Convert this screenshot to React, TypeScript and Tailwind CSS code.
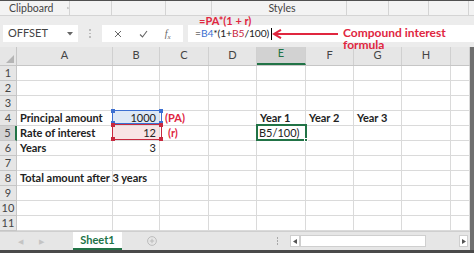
import React from "react";

const cols = ["A", "B", "C", "D", "E", "F", "G", "H", ""];
const widths = ["w-[96px]", "w-[47px]", "w-[49px]", "w-[48px]", "w-[49px]", "w-[48px]", "w-[48px]", "w-[49px]", "flex-1"];

type Cell = { text?: string; cls?: string };

const data: Record<number, Record<number, Cell>> = {
  4: {
    0: { text: "Principal amount", cls: "font-bold pl-[3px]" },
    1: { text: "1000", cls: "justify-end pr-[3px] bg-[#dde8f6]" },
    2: { text: "(PA)", cls: "font-bold text-[#e0263f] pl-[5px]" },
    4: { text: "Year 1", cls: "font-bold pl-[3px]" },
    5: { text: "Year 2", cls: "font-bold pl-[3px]" },
    6: { text: "Year 3", cls: "font-bold pl-[3px]" },
  },
  5: {
    0: { text: "Rate of interest", cls: "font-bold pl-[3px]" },
    1: { text: "12", cls: "justify-end pr-[3px] bg-[#f8e4e5]" },
    2: { text: "(r)", cls: "font-bold text-[#e0263f] pl-[8px]" },
    4: { text: "B5/100)", cls: "pl-[2px]" },
  },
  6: {
    0: { text: "Years", cls: "font-bold pl-[3px]" },
    1: { text: "3", cls: "justify-end pr-[3px]" },
  },
  8: {
    0: { text: "Total amount after 3 years", cls: "font-bold pl-[3px] whitespace-nowrap overflow-visible" },
  },
};

function Handles({ color }: { color: string }) {
  const c = `absolute w-[4px] h-[4px] ${color}`;
  return (
    <>
      <span className={`${c} -left-[2px] -top-[2px]`} />
      <span className={`${c} -right-[2px] -top-[2px]`} />
      <span className={`${c} -left-[2px] -bottom-[2px]`} />
      <span className={`${c} -right-[2px] -bottom-[2px]`} />
    </>
  );
}

export default function App() {
  return (
    <div className="relative w-[474px] h-[253px] overflow-hidden bg-white font-['Lato',sans-serif] text-[#222]">
      {/* ribbon group labels */}
      <div className="h-px bg-[#505050]" />
      <div className="flex h-[15px] bg-[#f3f3f3] border-b border-[#d4d4d4] text-[10.5px] text-[#444] leading-[15px]">
        <div className="w-[70px] flex items-center pl-[9px] gap-[14px] border-r border-[#d4d4d4]">
          <span>Clipboard</span>
          <svg width="6" height="6" viewBox="0 0 6 6" className="text-[#777]">
            <path d="M0.5 0.5H5.5V5.5H0.5Z" fill="none" stroke="currentColor" strokeWidth="0.8" />
            <path d="M1.5 1.5L4.5 4.5M4.5 2.5V4.5H2.5" fill="none" stroke="currentColor" strokeWidth="0.8" />
          </svg>
        </div>
        <div className="w-[42px] border-r border-[#d4d4d4]" />
        <div className="w-[54px] border-r border-[#d4d4d4]" />
        <div className="w-[46px] border-r border-[#d4d4d4]" />
        <div className="w-[135px] border-r border-[#d4d4d4] flex justify-center pl-[6px]">Styles</div>
        <div className="w-[42px] border-r border-[#d4d4d4]" />
        <div className="w-[40px] border-r border-[#d4d4d4]" />
        <div className="w-[40px] border-r border-[#d4d4d4]" />
        <div className="flex-1" />
      </div>

      {/* formula bar */}
      <div className="flex items-start h-[31px] bg-[#ececec] pt-[9px] text-[11px]">
        <div className="ml-[3px] w-[75px] h-[17px] bg-white flex items-center justify-between px-[5px] text-[#444]">
          <span>OFFSET</span>
          <svg width="6" height="4" viewBox="0 0 6 4"><path d="M0 0H6L3 3.5Z" fill="#666" /></svg>
        </div>
        <div className="w-[24px] h-[17px] flex flex-col items-center justify-center gap-[2px]">
          <span className="w-[1.5px] h-[1.5px] bg-[#bbb]" />
          <span className="w-[1.5px] h-[1.5px] bg-[#bbb]" />
          <span className="w-[1.5px] h-[1.5px] bg-[#bbb]" />
        </div>
        <div className="w-[81px] h-[17px] bg-white flex items-center justify-around px-[4px] text-[#555]">
          <svg width="8" height="8" viewBox="0 0 8 8"><path d="M1 1L7 7M7 1L1 7" stroke="#666" strokeWidth="1" /></svg>
          <svg width="9" height="8" viewBox="0 0 9 8"><path d="M1 4.5L3.5 7L8 1" fill="none" stroke="#666" strokeWidth="1.1" /></svg>
          <span className="italic font-['Liberation_Serif',serif] text-[10px] text-[#666]">f<sub className="text-[7px]">x</sub></span>
        </div>
        <div className="ml-[5px] flex-1 h-[17px] bg-white flex items-center pl-[7px] text-[10.3px] tracking-[-0.1px]">
          <span>=</span>
          <span className="text-[#3c6fd1]">B4</span>
          <span>*(1+</span>
          <span className="text-[#c8283e]">B5</span>
          <span>/100)</span>
          <span className="ml-[2px] w-px h-[12px] bg-black" />
        </div>
      </div>

      {/* grid + vertical edge */}
      <div className="flex">
        <div className="flex-1 text-[11px]">
          {/* column headers */}
          <div className="flex h-[19px] bg-[#e6e6e6] border-b border-[#c6c6c6] text-[#444]">
            <div className="w-[17px] border-r border-[#c6c6c6] flex items-end justify-end pr-[2px] pb-[2px]">
              <svg width="8" height="8" viewBox="0 0 8 8"><path d="M8 0V8H0Z" fill="#b5b5b5" /></svg>
            </div>
            {cols.map((c, i) => (
              <div
                key={i}
                className={`${widths[i]} flex items-end pb-[2px] justify-center border-r border-[#d0d0d0] ${
                  i === 4 ? "bg-[#d2d2d2] border-b-2 border-b-[#217346] text-[#217346] pb-0" : ""
                }`}
              >
                {c}
              </div>
            ))}
          </div>
          {/* rows */}
          {Array.from({ length: 11 }, (_, r) => r + 1).map((r) => (
            <div key={r} className="flex h-[15px]">
              <div
                className={`w-[17px] flex items-center justify-center text-[#444] border-b border-r ${
                  r === 5 ? "bg-[#d2d2d2] border-r-2 border-r-[#217346] border-b-[#c6c6c6]" : "bg-[#e6e6e6] border-[#c6c6c6]"
                }`}
              >
                {r}
              </div>
              {cols.map((_, i) => {
                const cell = data[r]?.[i];
                return (
                  <div
                    key={i}
                    className={`${widths[i]} relative flex items-center border-r border-b border-[#dadada] ${
                      i === 0 ? "overflow-visible z-10" : "overflow-hidden"
                    } ${cell?.cls ?? ""}`}
                  >
                    {cell?.text}
                  </div>
                );
              })}
            </div>
          ))}
          {/* sheet tabs / scrollbar */}
          <div className="flex items-stretch h-[19px] bg-[#e6e6e6] border-t border-[#cfcfcf]">
            <div className="w-[73px] flex items-center pl-[18px] gap-[16px] text-[#c4c4c4] text-[7px]">
              <span>◀</span>
              <span>▶</span>
            </div>
            <div className="w-[49px] bg-white border-b-2 border-[#217346] flex items-center justify-center font-bold text-[#217346] text-[11px]">
              Sheet1
            </div>
            <div className="w-[60px] flex items-center justify-center">
              <svg width="10" height="10" viewBox="0 0 10 10">
                <circle cx="5" cy="5" r="4.4" fill="none" stroke="#b8b8b8" strokeWidth="0.9" />
                <path d="M5 2.8V7.2M2.8 5H7.2" stroke="#b8b8b8" strokeWidth="0.9" />
              </svg>
            </div>
            <div className="w-[108px] flex items-center justify-end pr-[12px]">
              <div className="flex flex-col gap-[1.5px]">
                <span className="w-[1.5px] h-[1.5px] bg-[#a8a8a8]" />
                <span className="w-[1.5px] h-[1.5px] bg-[#a8a8a8]" />
                <span className="w-[1.5px] h-[1.5px] bg-[#a8a8a8]" />
              </div>
            </div>
            <div className="flex-1 flex items-center gap-0 pr-[2px]">
              <div className="w-[10px] h-[12px] bg-white border border-[#cfcfcf] flex items-center justify-center">
                <svg width="4" height="5" viewBox="0 0 4 5"><path d="M4 0V5L0 2.5Z" fill="#555" /></svg>
              </div>
              <div className="w-[126px] h-[12px] bg-white border border-[#cfcfcf]" />
              <div className="flex-1" />
              <div className="w-[9px] h-[12px] bg-white border border-[#cfcfcf] flex items-center justify-center">
                <svg width="4" height="5" viewBox="0 0 4 5"><path d="M0 0V5L4 2.5Z" fill="#555" /></svg>
              </div>
            </div>
          </div>
        </div>
        <div className="w-[4px] bg-[#6f6f6f]" />
      </div>
      <div className="h-[3px] bg-[#4a4a4a]" />

      {/* selections */}
      <div className="absolute left-[112px] top-[110px] w-[50px] h-[14px] border border-[#3c6fd1] z-20">
        <Handles color="bg-[#3c6fd1]" />
      </div>
      <div className="absolute left-[112px] top-[124px] w-[50px] h-[16px] border border-[#c8283e] z-20">
        <Handles color="bg-[#c8283e]" />
      </div>
      <div className="absolute left-[256px] top-[124px] w-[51px] h-[17px] border-2 border-[#217346] z-20">
        <span className="absolute -right-[3px] -bottom-[3px] w-[4px] h-[4px] bg-[#217346] border border-white" />
      </div>

      {/* annotations */}
      <div className="absolute left-[199px] top-[15px] text-[11px] font-bold text-[#e0263f] leading-none z-30">
        =PA*(1 + r)
      </div>
      <div className="absolute left-[272px] top-[29px] z-30">
        <svg width="66" height="10" viewBox="0 0 66 10">
          <path d="M3 5H66" stroke="#e0263f" strokeWidth="2" />
          <path d="M9 0.8L2 5L9 9.2" fill="none" stroke="#e0263f" strokeWidth="2" />
        </svg>
      </div>
      <div className="absolute left-[343px] top-[27px] text-[12px] font-bold text-[#e0263f] leading-[12px] z-30">
        Compound interest
        <br />
        formula
      </div>
    </div>
  );
}
